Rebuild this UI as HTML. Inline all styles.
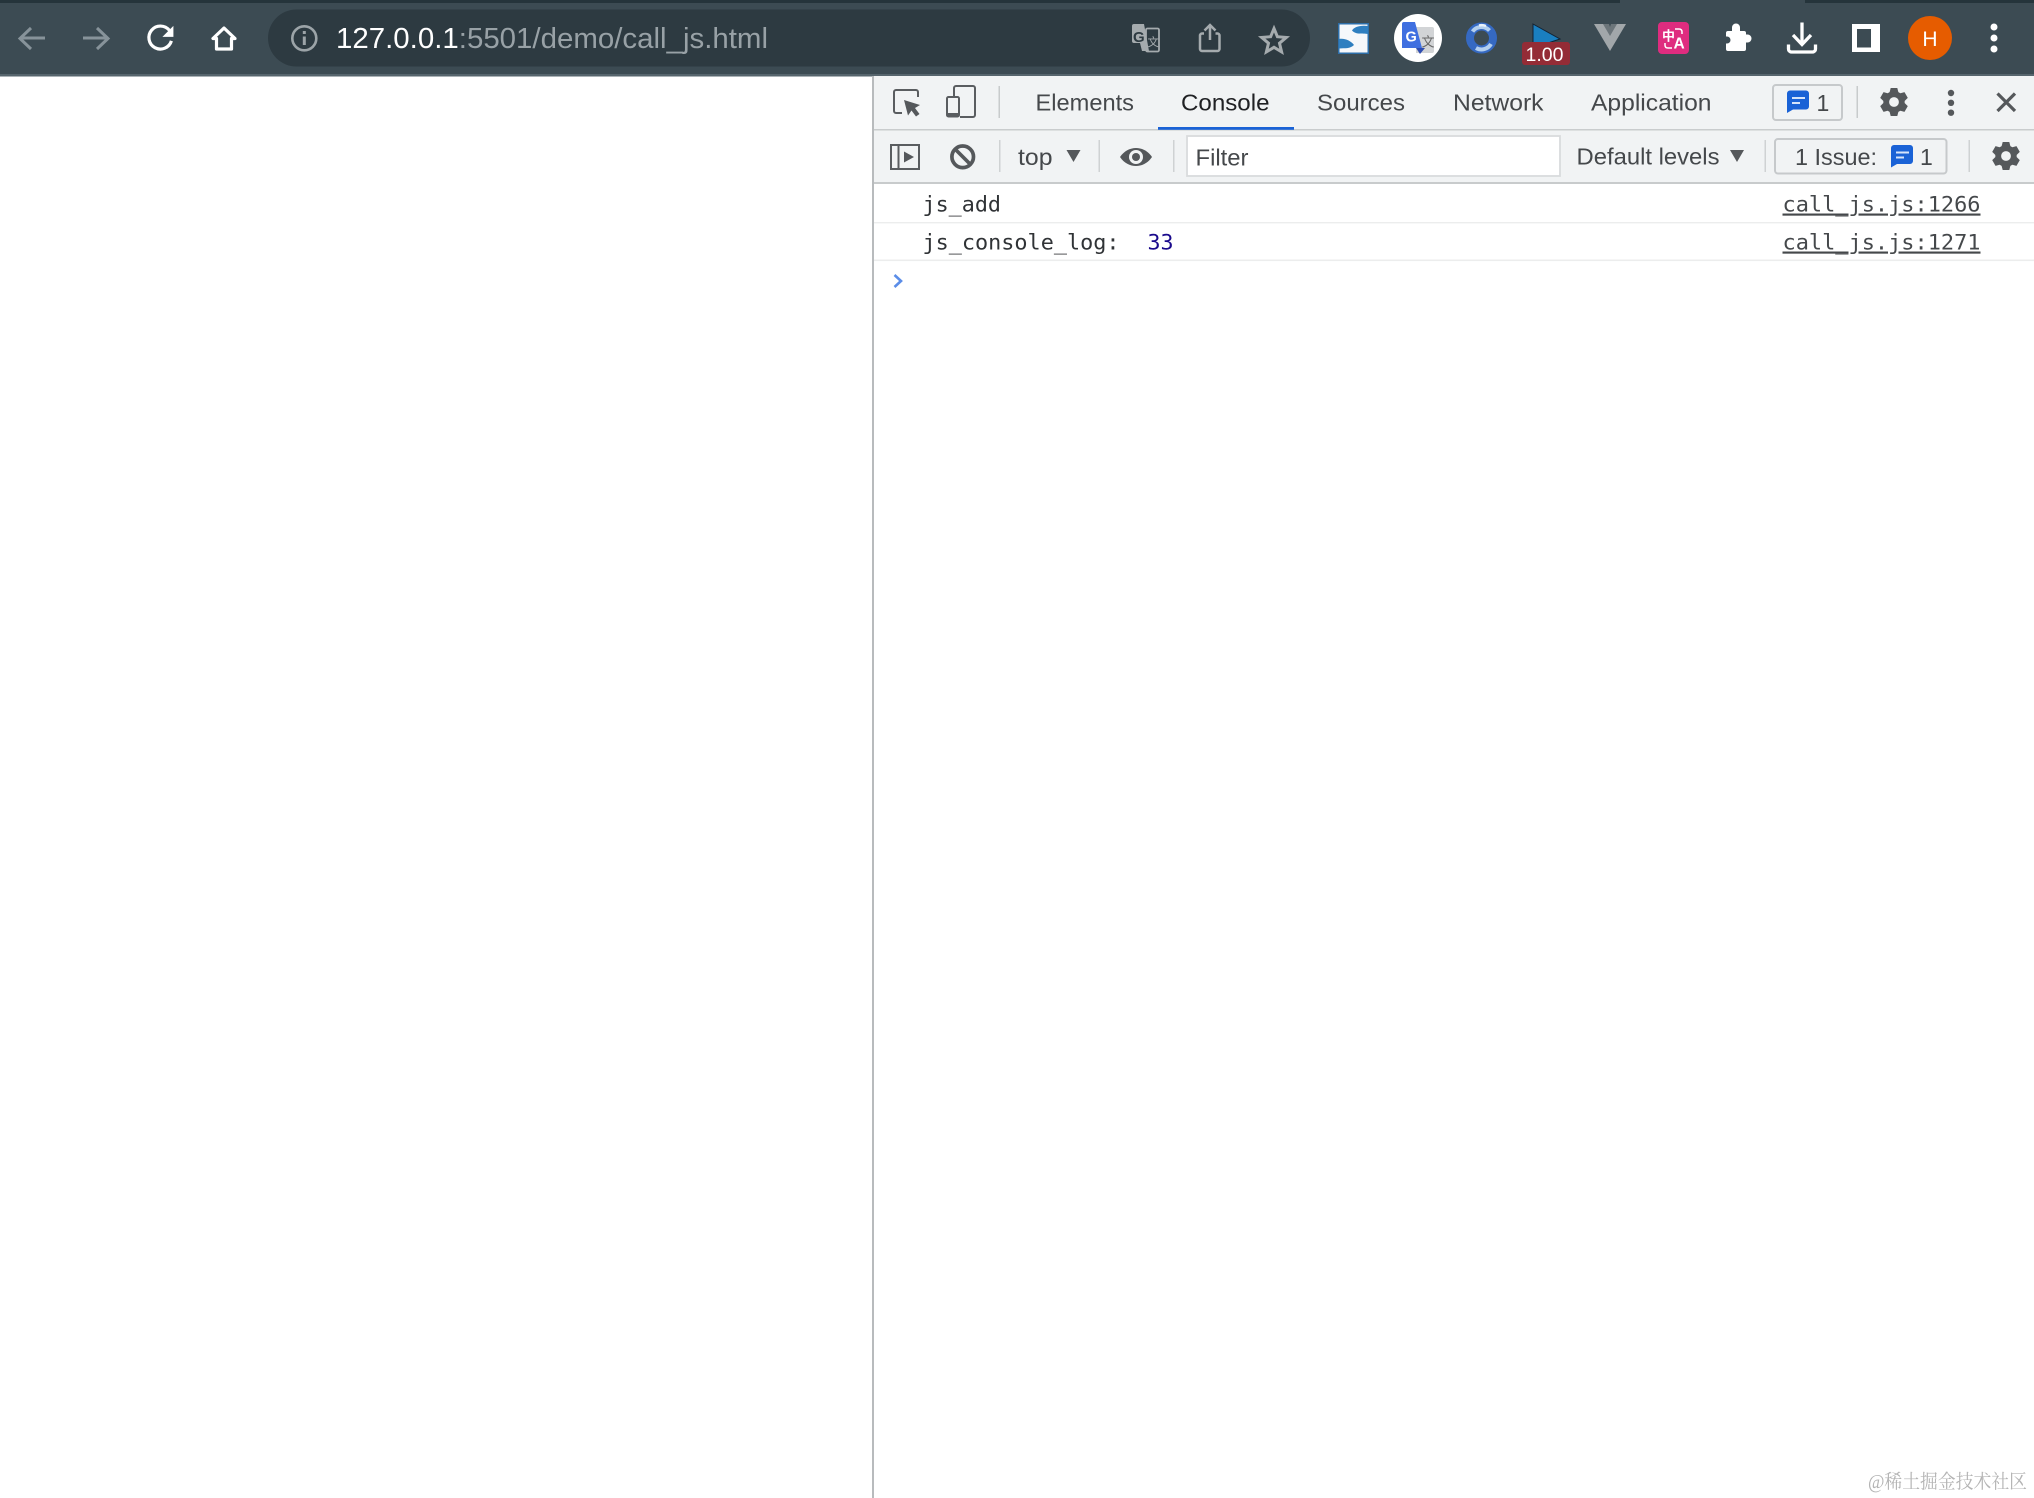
<!DOCTYPE html>
<html><head><meta charset="utf-8"><style>
html,body{margin:0;padding:0;background:#fff;width:2034px;height:1498px;overflow:hidden}
svg{display:block}
.s{font-family:"Liberation Sans",sans-serif}
.m{font-family:"DejaVu Sans Mono","Liberation Mono",monospace}
</style></head><body>
<svg width="2034" height="1498" viewBox="0 0 2034 1498" xmlns="http://www.w3.org/2000/svg">
<defs>
<g id="msg"><path d="M3 0h16a3 3 0 0 1 3 3v13a3 3 0 0 1-3 3H6l-6 3.500V3a3 3 0 0 1 3-3z" fill="#1a62d6"/><path d="M5 7.500h13M5 12.500h8" stroke="#d6e4fa" stroke-width="2"/></g>
<polygon id="tooth" points="-4.600,-9 -3.300,-14 3.300,-14 4.600,-9" fill="#55585b"/>
<g id="gear">
<circle r="7.800" fill="none" stroke="#55585b" stroke-width="5.800"/>
<use href="#tooth"/><use href="#tooth" transform="rotate(60)"/><use href="#tooth" transform="rotate(120)"/><use href="#tooth" transform="rotate(180)"/><use href="#tooth" transform="rotate(240)"/><use href="#tooth" transform="rotate(300)"/>
</g>
</defs>

<!-- browser toolbar -->
<rect width="2034" height="76" fill="#3c4b53"/>
<rect width="2034" height="3" fill="#25343b"/>
<rect x="1620" y="0" width="185" height="3" fill="#3c4b53"/>
<rect y="74" width="2034" height="2.500" fill="#56656d"/>
<rect x="268" y="9.500" width="1042" height="57" rx="28.500" fill="#2d3a41"/>

<g fill="none" stroke="#87939a" stroke-width="3">
<path d="M45 38H21M31 28L20 38.500L31 49"/>
<path d="M83 38H107M97 28L108 38.500L97 49"/>
</g>
<g transform="translate(-.6 .9)">
<path d="M170 29.500A11.500 11.500 0 1 0 172 40" fill="none" stroke="#fff" stroke-width="3.200"/>
<path d="M174 25V36H163Z" fill="#fff"/>
</g>
<path d="M224 28L213 38.500H216.500V49H231.500V38.500H235Z" fill="none" stroke="#fff" stroke-width="3.200" stroke-linejoin="round"/>
<circle cx="304.300" cy="38.300" r="12" fill="none" stroke="#9ca4a8" stroke-width="2.600"/>
<rect x="302.800" y="36.500" width="3" height="8.500" fill="#9ca4a8"/><rect x="302.800" y="31" width="3" height="3" fill="#9ca4a8"/>
<text class="s" x="336" y="48" font-size="29" fill="#fff" textLength="432" lengthAdjust="spacingAndGlyphs">127.0.0.1<tspan fill="#98a1a6">:5501/demo/call_js.html</tspan></text>

<!-- translate icon in omnibox -->
<rect x="1146" y="28.500" width="13" height="23" rx="1.500" fill="#2d3a41" stroke="#a5abae" stroke-width="1.800"/>
<path d="M1132 26a2 2 0 0 1 2-2h10l5 27h-7l-2-8h-6a2 2 0 0 1-2-2z" fill="#a5abae"/>
<text class="s" x="1133" y="42" font-size="15" font-weight="bold" fill="#2d3a41">G</text>
<text x="1147.500" y="46" font-size="11.500" fill="#a5abae" font-family="'Liberation Sans','Noto Sans CJK SC',sans-serif">文</text>
<!-- share -->
<path d="M1204 33.500h-2a2 2 0 0 0-2 2V49a2 2 0 0 0 2 2h15.500a2 2 0 0 0 2-2V35.500a2 2 0 0 0-2-2h-2M1210 40V25.500M1204.500 30.500L1210 25l5.500 5.500" fill="none" stroke="#a5abae" stroke-width="2.500"/>
<!-- star -->
<path d="M1274 28.500l3.400 8.200 8.900.7-6.800 5.800 2.100 8.700-7.600-4.600-7.600 4.600 2.100-8.700-6.800-5.800 8.900-.7z" fill="none" stroke="#a5abae" stroke-width="3"/>

<!-- S ext -->
<rect x="1338" y="23" width="31" height="31" fill="#2d6ea8"/>
<rect x="1339.500" y="24.500" width="28" height="28" fill="#f6f8fb"/>
<path d="M1368 26C1360 25 1354 27 1352 30.500C1356 35 1362 33 1368 34Z" fill="#2f7fc0"/>
<path d="M1339 39C1345 38 1351 41 1354 45C1350 49 1345 48 1339 48.500Z" fill="#2f7fc0"/>
<!-- google translate -->
<circle cx="1418" cy="38" r="24" fill="#fff"/>
<path d="M1416 27h16a2 2 0 0 1 2 2v22a2 2 0 0 1-2 2h-16z" fill="#d2d4d6"/>
<path d="M1402 24a2 2 0 0 1 2-2h11l7 26h-20z" fill="#3f6fe0"/>
<path d="M1416 48h9l-5 6z" fill="#2f4db0"/>
<text class="s" x="1405.500" y="41.500" font-size="14.500" font-weight="bold" fill="#fff">G</text>
<text x="1421.500" y="46.500" font-size="13" fill="#666" font-family="'Liberation Sans','Noto Sans CJK SC',sans-serif">文</text>
<!-- ring -->
<circle cx="1481.500" cy="38" r="11.500" fill="none" stroke="#3569c2" stroke-width="8"/>
<path d="M1472.500 31.500a11 11 0 0 1 17-1M1491 44a11 11 0 0 1-15 4" fill="none" stroke="#b3cfee" stroke-width="4"/>
<path d="M1479 25.500a12 12 0 0 1 7 .5" fill="none" stroke="#eaf2fb" stroke-width="2.500"/>
<!-- play -->
<path d="M1533 24L1560 39L1533 48z" fill="#1a7fc0" stroke="#123" stroke-width="1"/>
<rect x="1522" y="42" width="48" height="23" rx="3" fill="#942c36"/>
<text class="s" x="1544.500" y="61" font-size="19.500" fill="#fff" text-anchor="middle">1.00</text>
<!-- vue V -->
<path d="M1594 24h12l4 7 4-7h12l-16 27z" fill="#a2a7aa"/>
<path d="M1603 24h6l1 3 1-3h6l-7 12z" fill="#6c757a"/>
<!-- pink -->
<rect x="1658" y="22" width="31" height="32" rx="4" fill="#df2c7f"/>
<text x="1662" y="40.500" font-size="13" font-weight="bold" fill="#fff" font-family="'Noto Sans CJK SC',sans-serif">中</text>
<text class="s" x="1673.500" y="48.500" font-size="15.500" font-weight="bold" fill="#fff">A</text>
<path d="M1675 29h4q3 0 3 3v2M1665 43v2q0 3 3 3h4" fill="none" stroke="#fff" stroke-width="1.500"/>
<!-- puzzle -->
<path transform="translate(-1 0)" d="M1729 31h4v-3.500a4 4 0 0 1 8 0V31h4a2 2 0 0 1 2 2v1.500h1.500a4 4 0 0 1 0 8H1747V49a2 2 0 0 1-2 2h-16a2 2 0 0 1-2-2v-5.500h1a3.500 3.500 0 0 0 0-7h-1V33a2 2 0 0 1 2-2z" fill="#fff"/>
<!-- download -->
<path d="M1802 22.500V44M1793 35l9 9.500 9-9.500M1788.500 44.500V49a3 3 0 0 0 3 3h21a3 3 0 0 0 3-3v-4.500" fill="none" stroke="#fff" stroke-width="3.300"/>
<!-- sidebar -->
<path d="M1852 24h28v28h-28zM1857 29v18.500h14V29z" fill="#fff" fill-rule="evenodd"/>
<!-- avatar -->
<circle cx="1930" cy="38" r="22" fill="#e65c00"/>
<text class="s" x="1930" y="46" font-size="21" fill="#fff" text-anchor="middle">H</text>
<g fill="#fff"><circle cx="1994" cy="27" r="3.500"/><circle cx="1994" cy="38" r="3.500"/><circle cx="1994" cy="49" r="3.500"/></g>

<!-- devtools -->
<rect x="872" y="76" width="2" height="1422" fill="#b8bbbd"/>
<rect x="874" y="76" width="1160" height="54" fill="#f1f3f4"/>
<rect x="874" y="129" width="1160" height="1.600" fill="#c9cccd"/>
<rect x="874" y="130.500" width="1160" height="52" fill="#f1f3f4"/>
<rect x="874" y="182" width="1160" height="2" fill="#c8cbcc"/>

<!-- inspect / device -->
<path d="M902 113h-6a2 2 0 0 1-2-2V92a2 2 0 0 1 2-2h20a2 2 0 0 1 2 2v5" fill="none" stroke="#5a5d60" stroke-width="2"/>
<path d="M904 100l16 5-5 3 4.500 6-3.500 2.500-4.500-6-3.500 5z" fill="#55585b"/>
<path d="M954 96V88a2 2 0 0 1 2-2h17a2 2 0 0 1 2 2v27a2 2 0 0 1-2 2h-13" fill="none" stroke="#5a5d60" stroke-width="2"/>
<rect x="947" y="97" width="12" height="19.500" rx="1.500" fill="none" stroke="#5a5d60" stroke-width="2"/>
<rect x="947" y="113" width="12" height="4" fill="#5a5d60"/>
<rect x="998.500" y="86" width="1.500" height="32" fill="#c8cbcc"/>

<g class="s" font-size="23.500" fill="#45484b">
<text x="1035.500" y="110.500" textLength="98.500" lengthAdjust="spacingAndGlyphs">Elements</text>
<text x="1181" y="110.500" textLength="88.500" lengthAdjust="spacingAndGlyphs" fill="#202124">Console</text>
<text x="1317" y="110.500" textLength="88" lengthAdjust="spacingAndGlyphs">Sources</text>
<text x="1453" y="110.500" textLength="90.500" lengthAdjust="spacingAndGlyphs">Network</text>
<text x="1591" y="110.500" textLength="120.500" lengthAdjust="spacingAndGlyphs">Application</text>
</g>
<rect x="1158" y="127" width="136" height="2.800" fill="#1a62d6"/>

<rect x="1773" y="85" width="69" height="35" rx="3" fill="#f1f3f4" stroke="#c6c9cb" stroke-width="2"/>
<use href="#msg" x="1787" y="90.500"/>
<text class="s" x="1816.500" y="111" font-size="23" fill="#45484b">1</text>
<rect x="1856.500" y="86" width="1.500" height="32" fill="#c8cbcc"/>
<use href="#gear" x="1894" y="102"/>
<g fill="#55585b"><circle cx="1951" cy="93" r="3.200"/><circle cx="1951" cy="102.800" r="3.200"/><circle cx="1951" cy="112.700" r="3.200"/></g>
<path d="M1997.500 93.500L2015 111M2015 93.500L1997.500 111" stroke="#55585b" stroke-width="3.200"/>

<!-- console toolbar -->
<rect x="891" y="145" width="28" height="24" fill="none" stroke="#5a5d60" stroke-width="2"/>
<path d="M898.500 145v24" stroke="#5a5d60" stroke-width="2"/>
<path d="M904 151.500l10 5.500-10 5.500z" fill="#55585b"/>
<circle cx="962.700" cy="156.800" r="10.800" fill="none" stroke="#55585b" stroke-width="3.700"/>
<path d="M955 149L970.500 164.500" stroke="#55585b" stroke-width="3.700"/>
<rect x="999" y="140" width="1.500" height="32" fill="#cfd2d3"/>
<text class="s" x="1018" y="165" font-size="23.500" fill="#45484b" textLength="34.500" lengthAdjust="spacingAndGlyphs">top</text>
<path d="M1066.500 150H1080.500L1073.500 162z" fill="#55585b"/>
<rect x="1098.500" y="140" width="1.500" height="32" fill="#cfd2d3"/>
<path d="M1120 157c8-12 24-12 32 0c-8 12-24 12-32 0z" fill="#55585b"/>
<circle cx="1136" cy="157" r="7" fill="#f1f3f4"/><circle cx="1136" cy="157" r="4" fill="#55585b"/>
<rect x="1173" y="140" width="1.500" height="32" fill="#cfd2d3"/>
<rect x="1187" y="136" width="373" height="40" fill="#fff" stroke="#d9dbdd" stroke-width="1.800"/>
<text class="s" x="1195.500" y="165.500" font-size="23.500" fill="#45484b" textLength="53" lengthAdjust="spacingAndGlyphs">Filter</text>
<text class="s" x="1576.500" y="164.500" font-size="23.500" fill="#45484b" textLength="143" lengthAdjust="spacingAndGlyphs">Default levels</text>
<path d="M1730 150H1744L1737 162z" fill="#55585b"/>
<rect x="1764.500" y="140" width="1.500" height="32" fill="#cfd2d3"/>
<rect x="1775" y="139" width="171.500" height="34.500" rx="3" fill="#f1f3f4" stroke="#c6c9cb" stroke-width="2"/>
<text class="s" x="1795" y="165" font-size="23.500" fill="#45484b" textLength="82" lengthAdjust="spacingAndGlyphs">1 Issue:</text>
<use href="#msg" x="1891" y="145"/>
<text class="s" x="1920" y="165" font-size="23" fill="#45484b">1</text>
<rect x="1968.500" y="140" width="1.500" height="32" fill="#cfd2d3"/>
<use href="#gear" x="2006" y="156"/>

<!-- console rows -->
<rect x="874" y="222" width="1160" height="1.400" fill="#eceded"/>
<rect x="874" y="259.500" width="1160" height="1.600" fill="#eceded"/>
<g class="m" font-size="21.500" fill="#303336">
<text x="922.500" y="211.500" textLength="78.500" lengthAdjust="spacingAndGlyphs">js_add</text>
<text x="922.500" y="249.500" textLength="197" lengthAdjust="spacingAndGlyphs">js_console_log:</text>
<text x="1147.500" y="249.500" textLength="26" lengthAdjust="spacingAndGlyphs" fill="#1a0a8c">33</text>
<text x="1782.500" y="211.500" textLength="198" lengthAdjust="spacingAndGlyphs" fill="#45484b" text-decoration="underline">call_js.js:1266</text>
<text x="1782.500" y="249.500" textLength="198" lengthAdjust="spacingAndGlyphs" fill="#45484b" text-decoration="underline">call_js.js:1271</text>
</g>
<path d="M894.500 275l6.500 6-6.500 6" fill="none" stroke="#5b8de8" stroke-width="2.600"/>

<text x="1868" y="1488" font-size="19.500" fill="#b4b4b4" font-family="'Liberation Serif','Noto Serif CJK SC',serif" textLength="159" lengthAdjust="spacingAndGlyphs">@稀土掘金技术社区</text>
</svg>
</body></html>
